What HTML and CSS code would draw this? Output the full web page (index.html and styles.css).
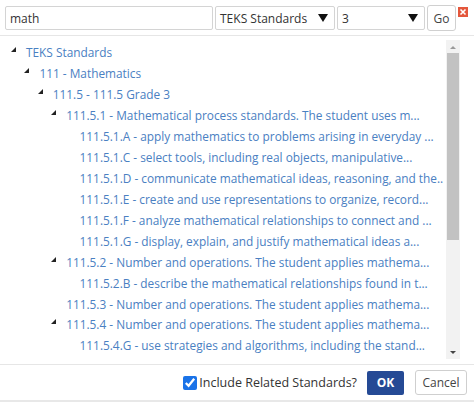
FILE: index.html
```html
<!DOCTYPE html>
<html>
<head>
<meta charset="utf-8">
<link rel="stylesheet" href="styles.css">
</head>
<body>
<div class="dialog">
  <div class="toolbar">
    <input class="search" type="text" value="math">
    <div class="select sel-std"><span>TEKS Standards</span><span class="caret"></span></div>
    <div class="select sel-grade"><span>3</span><span class="caret"></span></div>
    <button class="go">Go</button>
    <span class="close"><svg width="10" height="10" viewBox="0 0 10 10"><rect width="10" height="10" fill="#e4573c"/><path d="M2.5 2.5 L7.5 7.5 M7.5 2.5 L2.5 7.5" stroke="#fff" stroke-width="1.6"/></svg></span>
  </div>
  <div class="body">
    <div class="tree">
      <ul class="lvl root">
        <li><div class="row"><span class="tog"><svg width="5" height="5" viewBox="0 0 5 5"><polygon points="5,0 5,5 0,5" fill="#222"/></svg></span><a>TEKS Standards</a></div>
          <ul class="lvl">
            <li><div class="row"><span class="tog"><svg width="5" height="5" viewBox="0 0 5 5"><polygon points="5,0 5,5 0,5" fill="#222"/></svg></span><a>111 - Mathematics</a></div>
              <ul class="lvl">
                <li><div class="row"><span class="tog"><svg width="5" height="5" viewBox="0 0 5 5"><polygon points="5,0 5,5 0,5" fill="#222"/></svg></span><a>111.5 - 111.5 Grade 3</a></div>
                  <ul class="lvl">
                    <li><div class="row"><span class="tog"><svg width="5" height="5" viewBox="0 0 5 5"><polygon points="5,0 5,5 0,5" fill="#222"/></svg></span><a>111.5.1 - Mathematical process standards. The student uses m...</a></div>
                      <ul class="lvl">
                        <li><div class="row"><span class="tog"></span><a>111.5.1.A - apply mathematics to problems arising in everyday ...</a></div></li>
                        <li><div class="row"><span class="tog"></span><a>111.5.1.C - select tools, including real objects, manipulative...</a></div></li>
                        <li><div class="row"><span class="tog"></span><a>111.5.1.D - communicate mathematical ideas, reasoning, and the..</a></div></li>
                        <li><div class="row"><span class="tog"></span><a>111.5.1.E - create and use representations to organize, record...</a></div></li>
                        <li><div class="row"><span class="tog"></span><a>111.5.1.F - analyze mathematical relationships to connect and ...</a></div></li>
                        <li><div class="row"><span class="tog"></span><a>111.5.1.G - display, explain, and justify mathematical ideas a...</a></div></li>
                      </ul>
                    </li>
                    <li><div class="row"><span class="tog"><svg width="5" height="5" viewBox="0 0 5 5"><polygon points="5,0 5,5 0,5" fill="#222"/></svg></span><a>111.5.2 - Number and operations. The student applies mathema...</a></div>
                      <ul class="lvl">
                        <li><div class="row"><span class="tog"></span><a>111.5.2.B - describe the mathematical relationships found in t...</a></div></li>
                      </ul>
                    </li>
                    <li><div class="row"><span class="tog"></span><a>111.5.3 - Number and operations. The student applies mathema...</a></div></li>
                    <li><div class="row"><span class="tog"><svg width="5" height="5" viewBox="0 0 5 5"><polygon points="5,0 5,5 0,5" fill="#222"/></svg></span><a>111.5.4 - Number and operations. The student applies mathema...</a></div>
                      <ul class="lvl">
                        <li><div class="row"><span class="tog"></span><a>111.5.4.G - use strategies and algorithms, including the stand...</a></div></li>
                      </ul>
                    </li>
                  </ul>
                </li>
              </ul>
            </li>
          </ul>
        </li>
      </ul>
    </div>
    <div class="scrollbar">
      <span class="arrow up"></span>
      <div class="thumb"></div>
      <div class="spacer"></div>
      <span class="arrow down"></span>
    </div>
  </div>
  <div class="footer">
    <label class="check"><input type="checkbox" checked><span>Include Related Standards?</span></label>
    <button class="ok">OK</button>
    <button class="cancel">Cancel</button>
  </div>
</div>
</body>
</html>
```
FILE: styles.css
```css
html, body {
  margin: 0;
  padding: 0;
  background: #fff;
}
body {
  font-family: "Open Sans", sans-serif;
  font-size: 12px;
  color: #333;
  width: 474px;
  height: 402px;
  overflow: hidden;
}
.dialog {
  display: flex;
  flex-direction: column;
  height: 400px;
  border-bottom: 2px solid #e8e8e8;
}
.toolbar {
  display: flex;
  align-items: flex-start;
  gap: 2px;
  padding: 5px 0 5px 5px;
  border-bottom: 1px solid #e6e6e6;
  height: 25px;
}
.search {
  box-sizing: border-box;
  width: 208px;
  height: 24px;
  margin-top: 1px;
  border: 1px solid #d4d4d4;
  border-radius: 2px;
  padding: 0 4px;
  font-family: inherit;
  font-size: 12px;
  color: #333;
  outline: none;
}
.select {
  box-sizing: border-box;
  height: 24px;
  margin-top: 1px;
  border: 1px solid #d4d4d4;
  border-radius: 2px;
  display: flex;
  align-items: center;
  justify-content: space-between;
  padding: 0 6px 0 4px;
}
.sel-std { width: 120px; }
.sel-grade { width: 88px; }
.caret {
  width: 0;
  height: 0;
  border-left: 5px solid transparent;
  border-right: 5px solid transparent;
  border-top: 8px solid #111;
}
.go {
  box-sizing: border-box;
  width: 29px;
  height: 26px;
  border: 1px solid #d0d0d0;
  border-radius: 3px;
  background: #fff;
  font-family: inherit;
  font-size: 12px;
  color: #444;
  padding: 0;
}
.close {
  display: block;
  width: 10px;
  height: 10px;
  margin-top: 2px;
  line-height: 0;
}
.body {
  flex: 1;
  display: flex;
  min-height: 0;
  border-bottom: 1px solid #e6e6e6;
}
.tree {
  flex: 1;
  overflow: hidden;
  padding-top: 6px;
}
.lvl {
  list-style: none;
  margin: 0;
  padding: 0 0 0 13.4px;
}
.root { padding-left: 11px; }
.row {
  display: flex;
  align-items: center;
  height: 20.93px;
  white-space: nowrap;
  font-size: 11.85px;
}
.tog {
  flex: none;
  width: 15px;
  height: 10px;
  line-height: 0;
}
.tog svg { display: block; }
.row a {
  color: #4a80c2;
}
.scrollbar {
  flex: none;
  width: 14px;
  margin: 4px 14px 5px 0;
  background: #f2f2f2;
  display: flex;
  flex-direction: column;
  align-items: center;
}
.arrow {
  width: 0;
  height: 0;
  border-left: 3px solid transparent;
  border-right: 3px solid transparent;
}
.arrow.up {
  border-bottom: 3px solid #999;
  margin: 6px 0 4px;
}
.arrow.down {
  border-top: 3px solid #444;
  margin: 4px 0 5px;
}
.thumb {
  width: 12px;
  height: 187px;
  background: #c2c2c2;
}
.spacer { flex: 1; }
.footer {
  display: flex;
  align-items: center;
  justify-content: flex-end;
  height: 35px;
  padding-right: 7px;
}
.check {
  display: flex;
  align-items: center;
  font-size: 12.5px;
  color: #333;
  margin-right: 10px;
}
.check input {
  width: 14px;
  height: 14px;
  margin: 0 2px 0 0;
  accent-color: #1a73e8;
}
.ok {
  box-sizing: border-box;
  width: 37px;
  height: 24px;
  border: none;
  border-radius: 2px;
  background: #254a95;
  color: #fff;
  font-family: inherit;
  font-weight: bold;
  font-size: 12px;
  margin-right: 11px;
  padding: 0;
}
.cancel {
  box-sizing: border-box;
  width: 52px;
  height: 25px;
  border: 1px solid #cfcfcf;
  border-radius: 3px;
  background: #fff;
  color: #444;
  font-family: inherit;
  font-size: 12px;
  padding: 0;
}
```
